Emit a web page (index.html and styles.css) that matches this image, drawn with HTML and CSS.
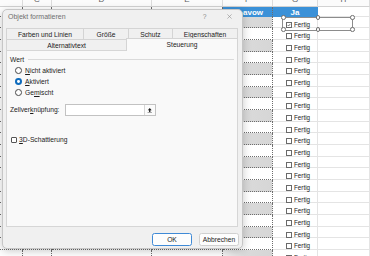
FILE: index.html
```html
<!DOCTYPE html>
<html lang="de">
<head>
<meta charset="utf-8">
<title>Objekt formatieren</title>
<link rel="stylesheet" href="styles.css">
</head>
<body>
<div class="sheet">
  <div class="ch"></div><div class="ch">C</div><div class="ch">D</div><div class="ch">E</div><div class="ch">F</div><div class="ch">G</div><div class="ch">H</div>

  <div class="c"></div><div class="c"></div><div class="c"></div><div class="c"></div><div class="c th th-f">avow</div><div class="c th th-g">Ja</div><div class="c h"></div>

  <div class="c"></div><div class="c"></div><div class="c"></div><div class="c"></div><div class="c f alt"></div><div class="c g"><span class="cbx on"><svg viewBox="0 0 6 6"><path d="M1 3.1 L2.4 4.5 L5 1.4" fill="none" stroke="#222" stroke-width="0.9"/></svg></span>Fertig</div><div class="c h"></div>
  <div class="c"></div><div class="c"></div><div class="c"></div><div class="c"></div><div class="c f"></div><div class="c g"><span class="cbx"></span>Fertig</div><div class="c h"></div>
  <div class="c"></div><div class="c"></div><div class="c"></div><div class="c"></div><div class="c f alt"></div><div class="c g"><span class="cbx"></span>Fertig</div><div class="c h"></div>
  <div class="c"></div><div class="c"></div><div class="c"></div><div class="c"></div><div class="c f"></div><div class="c g"><span class="cbx"></span>Fertig</div><div class="c h"></div>
  <div class="c"></div><div class="c"></div><div class="c"></div><div class="c"></div><div class="c f alt"></div><div class="c g"><span class="cbx"></span>Fertig</div><div class="c h"></div>
  <div class="c"></div><div class="c"></div><div class="c"></div><div class="c"></div><div class="c f"></div><div class="c g"><span class="cbx"></span>Fertig</div><div class="c h"></div>
  <div class="c"></div><div class="c"></div><div class="c"></div><div class="c"></div><div class="c f alt"></div><div class="c g"><span class="cbx"></span>Fertig</div><div class="c h"></div>
  <div class="c"></div><div class="c"></div><div class="c"></div><div class="c"></div><div class="c f"></div><div class="c g"><span class="cbx"></span>Fertig</div><div class="c h"></div>
  <div class="c"></div><div class="c"></div><div class="c"></div><div class="c"></div><div class="c f alt"></div><div class="c g"><span class="cbx"></span>Fertig</div><div class="c h"></div>
  <div class="c"></div><div class="c"></div><div class="c"></div><div class="c"></div><div class="c f"></div><div class="c g"><span class="cbx"></span>Fertig</div><div class="c h"></div>
  <div class="c"></div><div class="c"></div><div class="c"></div><div class="c"></div><div class="c f alt"></div><div class="c g"><span class="cbx"></span>Fertig</div><div class="c h"></div>
  <div class="c"></div><div class="c"></div><div class="c"></div><div class="c"></div><div class="c f"></div><div class="c g"><span class="cbx"></span>Fertig</div><div class="c h"></div>
  <div class="c"></div><div class="c"></div><div class="c"></div><div class="c"></div><div class="c f alt"></div><div class="c g"><span class="cbx"></span>Fertig</div><div class="c h"></div>
  <div class="c"></div><div class="c"></div><div class="c"></div><div class="c"></div><div class="c f"></div><div class="c g"><span class="cbx"></span>Fertig</div><div class="c h"></div>
  <div class="c"></div><div class="c"></div><div class="c"></div><div class="c"></div><div class="c f alt"></div><div class="c g"><span class="cbx"></span>Fertig</div><div class="c h"></div>
  <div class="c"></div><div class="c"></div><div class="c"></div><div class="c"></div><div class="c f"></div><div class="c g"><span class="cbx"></span>Fertig</div><div class="c h"></div>
  <div class="c"></div><div class="c"></div><div class="c"></div><div class="c"></div><div class="c f alt"></div><div class="c g"><span class="cbx"></span>Fertig</div><div class="c h"></div>
  <div class="c"></div><div class="c"></div><div class="c"></div><div class="c"></div><div class="c f"></div><div class="c g"><span class="cbx"></span>Fertig</div><div class="c h"></div>
  <div class="c"></div><div class="c"></div><div class="c"></div><div class="c"></div><div class="c f alt"></div><div class="c g"><span class="cbx"></span>Fertig</div><div class="c h"></div>
  <div class="c"></div><div class="c"></div><div class="c"></div><div class="c"></div><div class="c f"></div><div class="c g"><span class="cbx"></span>Fertig</div><div class="c h"></div>
  <div class="c"></div><div class="c"></div><div class="c"></div><div class="c"></div><div class="c f alt"></div><div class="c g"><span class="cbx"></span>Fertig</div><div class="c h"></div>

  <div class="selframe">
    <span class="hd hd-tl"></span><span class="hd hd-tm"></span><span class="hd hd-tr"></span>
    <span class="hd hd-bl"></span><span class="hd hd-bm"></span><span class="hd hd-br"></span>
  </div>
</div>

<div class="dialog">
  <div class="titlebar">
    <span class="title">Objekt formatieren</span>
    <span class="tb-help">?</span>
    <span class="tb-close"><svg viewBox="0 0 6 6"><path d="M0.5 0.5 L5.5 5.5 M5.5 0.5 L0.5 5.5" stroke="#8a8a8a" stroke-width="0.7" fill="none"/></svg></span>
  </div>
  <div class="dbody">
    <div class="tabrow">
      <div class="tab t1">Farben und Linien</div>
      <div class="tab t2">Größe</div>
      <div class="tab t3">Schutz</div>
      <div class="tab t4">Eigenschaften</div>
    </div>
    <div class="tabrow tabrow2">
      <div class="tab t5">Alternativtext</div>
      <div class="tab t6 active">Steuerung</div>
    </div>
    <div class="panel">
      <div class="group-head"><span>Wert</span><span class="gline"></span></div>
      <div class="radios">
        <div class="ropt"><span class="radio"></span><span><u>N</u>icht aktiviert</span></div>
        <div class="ropt"><span class="radio on"></span><span><u>A</u>ktiviert</span></div>
        <div class="ropt"><span class="radio"></span><span>Ge<u>m</u>ischt</span></div>
      </div>
      <div class="linkrow">
        <span class="linklabel">Zellver<u>k</u>nüpfung:</span>
        <div class="refedit">
          <span class="refbtn"><svg viewBox="0 0 6 7"><path d="M3 1 L0.9 3.4 L2.3 3.4 L2.3 5.4 L3.7 5.4 L3.7 3.4 L5.1 3.4 Z" fill="#1a1a1a"/><path d="M0.6 6.5 L5.4 6.5" stroke="#1a1a1a" stroke-width="0.8"/></svg></span>
        </div>
      </div>
      <div class="chkrow"><span class="cbx2"></span><span><u>3</u>D-Schattierung</span></div>
    </div>
    <div class="buttons">
      <span class="btn btn-ok">OK</span>
      <span class="btn">Abbrechen</span>
    </div>
  </div>
</div>
</body>
</html>
```

FILE: styles.css
```css
* { box-sizing: border-box; }
html, body { margin: 0; padding: 0; }
body {
  width: 370px;
  height: 256px;
  overflow: hidden;
  position: relative;
  background: #ffffff;
  font-family: "Liberation Sans", Arial, sans-serif;
}

/* ---------- spreadsheet ---------- */
.sheet {
  display: grid;
  grid-template-columns: 23px 29px 100px 71px 50px 45px 52px;
  grid-template-rows: 7px 10px repeat(7, 11px 12px 12px) 12px;
  height: 256px;
  overflow: hidden;
  position: relative;
}
.ch {
  overflow: hidden;
  display: flex;
  align-items: flex-end;
  justify-content: center;
  font-size: 8px;
  line-height: 8px;
  padding-bottom: 2px;
  color: #5b5b5b;
  background: #fbfbfb;
  border-right: 1px solid #dcdcdc;
  border-bottom: 1px solid #d2d2d2;
}
.c {
  border-right: 1px dotted #6d6d6d;
  border-bottom: 1px dotted #6d6d6d;
}
.c.g, .c.h {
  border-right: 1px solid #e4e4e4;
  border-bottom: 1px solid #e4e4e4;
}
.c.f.alt {
  background: linear-gradient(90deg, #f4f4f4 0%, #dadada 45%, #d6d6d6 100%);
}
.th {
  background: #3b91d8;
  color: #ffffff;
  font-weight: bold;
  font-size: 8px;
  display: flex;
  align-items: center;
  border-bottom: none;
}
.th-f { justify-content: flex-end; padding-right: 9px; }
.th-g { justify-content: center; border-right: 1px solid #3b91d8; }
.c.g {
  display: flex;
  align-items: flex-start;
  gap: 2.3px;
  padding: 5px 0 0 12.7px;
  font-size: 6.3px;
  line-height: 6px;
  color: #222;
}
.cbx {
  flex: none;
  width: 6px;
  height: 6px;
  border: 0.8px solid #6a6a6a;
  background: #fff;
  display: block;
}
.cbx svg { display: block; width: 100%; height: 100%; }

.selframe {
  position: absolute;
  left: 282.3px;
  top: 16.7px;
  width: 71px;
  height: 14px;
  border: 0.8px solid #8c8c8c;
  pointer-events: none;
}
.hd {
  position: absolute;
  width: 4.6px;
  height: 4.6px;
  border-radius: 50%;
  background: #fff;
  border: 0.8px solid #6f6f6f;
  margin: -2.3px 0 0 -2.3px;
}
.hd-tl { left: 0; top: 0; }
.hd-tm { left: 50%; top: 0; }
.hd-tr { left: 100%; top: 0; }
.hd-bl { left: 0; top: 100%; }
.hd-bm { left: 50%; top: 100%; }
.hd-br { left: 100%; top: 100%; }

/* ---------- dialog ---------- */
.dialog {
  position: absolute;
  left: 2px;
  top: 9px;
  width: 241px;
  height: 240px;
  background: #f0f0f0;
  border: 1px solid #c6c6c6;
  border-radius: 5px;
  box-shadow: 0 2px 9px rgba(0, 0, 0, 0.22);
  display: flex;
  flex-direction: column;
  font-size: 6.7px;
  color: #1b1b1b;
}
.titlebar {
  height: 13px;
  display: flex;
  align-items: center;
  padding: 0 7.3px 0 5px;
  flex: none;
}
.title { flex: 1; font-size: 7px; color: #6f6f6f; }
.tb-help {
  width: 8px;
  text-align: center;
  font-size: 6.8px;
  color: #8a8a8a;
}
.tb-close {
  width: 10px;
  height: 6px;
  margin-left: 16.2px;
  display: flex;
  justify-content: center;
}
.tb-close svg { width: 5px; height: 5px; display: block; }

.dbody {
  flex: 1;
  display: flex;
  flex-direction: column;
  padding: 5px 4px 0 3px;
}
.tabrow {
  display: flex;
  height: 11px;
  flex: none;
}
.tab {
  display: flex;
  align-items: center;
  justify-content: center;
  border-top: 1px solid #d4d4d4;
  border-left: 1px solid #d4d4d4;
  background: #f0f0f0;
  white-space: nowrap;
}
.tab:last-child { border-right: 1px solid #d4d4d4; }
.t1 { width: 77px; }
.t2 { width: 45px; }
.t3 { width: 44px; }
.t4 { width: 66px; }
.t5 { width: 120px; }
.t6 { width: 112px; }
.tab.active {
  background: #f9f9f9;
  margin-top: -1.3px;
  height: 13.3px;
  position: relative;
  z-index: 1;
}
.panel {
  flex: none;
  height: 177px;
  background: #f9f9f9;
  border: 1px solid #d6d6d6;
  padding: 0 3px 0 3px;
  display: flex;
  flex-direction: column;
}
.group-head {
  display: flex;
  align-items: center;
  height: 7px;
  margin-top: 5px;
  gap: 4px;
}
.gline { flex: 1; height: 1px; background: #dadada; }
.radios {
  margin-top: 2.3px;
  padding-left: 5px;
  display: flex;
  flex-direction: column;
}
.ropt {
  height: 11px;
  display: flex;
  align-items: center;
  gap: 3.3px;
}
.radio {
  flex: none;
  width: 6.8px;
  height: 6.8px;
  border-radius: 50%;
  border: 0.9px solid #474747;
  background: #fff;
  display: flex;
  align-items: center;
  justify-content: center;
}
.radio.on {
  border: none;
  background: #0f6cbd;
}
.radio.on::after {
  content: "";
  width: 2.8px;
  height: 2.8px;
  border-radius: 50%;
  background: #fff;
}
.linkrow {
  margin-top: 5.7px;
  height: 12px;
  display: flex;
  align-items: center;
}
.linklabel { width: 55px; flex: none; }
.refedit {
  width: 91px;
  height: 12px;
  background: #fff;
  border: 1px solid #c2c2c2;
  display: flex;
  justify-content: flex-end;
}
.refbtn {
  width: 11px;
  height: 100%;
  border-left: 1px solid #d6d6d6;
  background: #fbfbfb;
  display: flex;
  align-items: center;
  justify-content: center;
}
.refbtn svg { width: 5.5px; height: 6.5px; display: block; }
.chkrow {
  margin-top: 19.7px;
  height: 8px;
  display: flex;
  align-items: center;
  gap: 2.3px;
  padding-left: 1px;
}
.cbx2 {
  flex: none;
  width: 5.8px;
  height: 5.8px;
  border: 0.9px solid #555;
  border-radius: 1px;
  background: #fff;
}
.buttons {
  flex: 1;
  display: flex;
  justify-content: flex-end;
  align-items: flex-start;
  gap: 7px;
  padding-top: 6px;
  margin-right: -1px;
}
.btn {
  width: 40px;
  height: 13px;
  display: flex;
  align-items: center;
  justify-content: center;
  background: #fdfdfd;
  border: 1px solid #d0d0d0;
  border-radius: 2.5px;
}
.btn-ok { border-color: #3f8ad6; }
```
